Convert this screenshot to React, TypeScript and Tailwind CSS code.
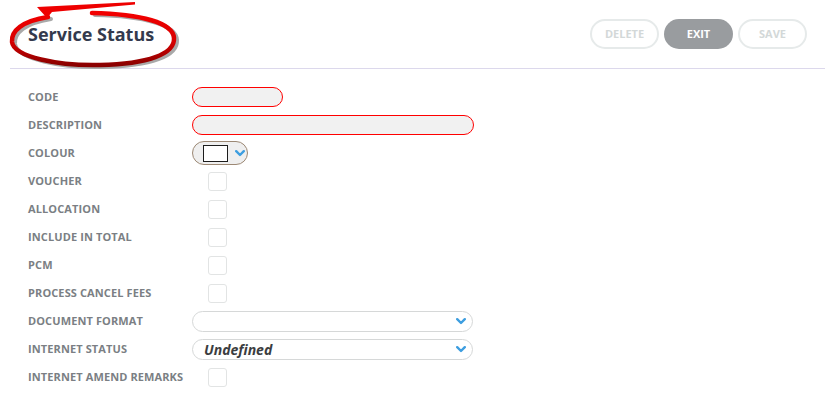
import type { ReactNode } from "react";

const labelClass =
  "w-[164px] shrink-0 text-[11px] font-bold uppercase tracking-[0.01em] text-[#7b7f84]";

function Chevron() {
  return (
    <svg width="10" height="7" viewBox="0 0 10 7" aria-hidden="true">
      <path
        d="M1.2 1.2 L5 5 L8.8 1.2"
        fill="none"
        stroke="#3d9ee0"
        strokeWidth="2.4"
        strokeLinecap="round"
        strokeLinejoin="round"
      />
    </svg>
  );
}

function Checkbox() {
  return (
    <div className="ml-4 h-[19px] w-[19px] rounded-[3px] border border-[#e2e4e4] bg-white" />
  );
}

function Row({ label, children }: { label: string; children: ReactNode }) {
  return (
    <div className="flex h-7 items-center">
      <span className={labelClass}>{label}</span>
      {children}
    </div>
  );
}

function Select({ value }: { value?: string }) {
  return (
    <div className="flex h-[21px] w-[281px] items-center justify-between rounded-full border border-[#d6d8d8] bg-white pl-[11px] pr-[6px]">
      <span className="text-[14px] font-bold italic text-[#3b3d40]">{value}</span>
      <Chevron />
    </div>
  );
}

const ringPath =
  "M48 17 C22 21 11 31 12 42 C14 57 58 66 100 65 C148 64 175 54 174 38 C173 23 142 14 92 13";

// hand-drawn red circle around the page title
function TitleMarker() {
  return (
    <svg
      className="pointer-events-none absolute -left-[10px] top-0"
      width="200"
      height="75"
      viewBox="0 0 200 75"
      aria-hidden="true"
    >
      <defs>
        <linearGradient id="ring" x1="0" y1="0" x2="0" y2="1">
          <stop offset="0" stopColor="#f20000" />
          <stop offset="0.55" stopColor="#d60000" />
          <stop offset="1" stopColor="#8a0000" />
        </linearGradient>
      </defs>
      <path
        d={ringPath}
        fill="none"
        stroke="#a9a9a9"
        strokeWidth="4"
        strokeLinecap="round"
        transform="translate(3 2)"
      />
      <path
        d={ringPath}
        fill="none"
        stroke="url(#ring)"
        strokeWidth="4.5"
        strokeLinecap="round"
      />
      <path d="M37 7 L135 2 L135 4.5 L52 12 L47 18 Z" fill="#ee0000" />
    </svg>
  );
}

export default function App() {
  return (
    <main className="min-h-[401px] bg-white font-['Open_Sans',sans-serif]">
      <header className="relative ml-[10px] flex h-[69px] items-center justify-between border-b border-[#dcd8ec] pl-[18px] pr-[18px]">
        <TitleMarker />
        <h1 className="relative text-[18px] font-bold text-[#333a4d]">
          Service Status
        </h1>
        <div className="flex gap-[5px]">
          <button className="h-[30px] w-[69px] rounded-full border-2 border-[#e6eaea] bg-white text-[11px] font-bold text-[#d3d8d8]">
            DELETE
          </button>
          <button className="h-[30px] w-[69px] rounded-full bg-[#999c9f] text-[11px] font-bold text-white">
            EXIT
          </button>
          <button className="h-[30px] w-[69px] rounded-full border-2 border-[#e6eaea] bg-white text-[11px] font-bold text-[#d3d8d8]">
            SAVE
          </button>
        </div>
      </header>

      <section className="pl-7 pt-[14px]">
        <Row label="Code">
          <div className="h-[20px] w-[91px] rounded-full border border-[#ff0000] bg-[#f1f1f1]" />
        </Row>
        <Row label="Description">
          <div className="h-[20px] w-[282px] rounded-full border border-[#ff0000] bg-[#f1f1f1]" />
        </Row>
        <Row label="Colour">
          <div className="flex h-[24px] w-[56px] items-center gap-[7px] rounded-full border border-[#9c8874] bg-[#efefef] pl-[10px]">
            <div className="h-[17px] w-[25px] border border-[#1c1c1c] bg-white" />
            <Chevron />
          </div>
        </Row>
        <Row label="Voucher">
          <Checkbox />
        </Row>
        <Row label="Allocation">
          <Checkbox />
        </Row>
        <Row label="Include in total">
          <Checkbox />
        </Row>
        <Row label="PCM">
          <Checkbox />
        </Row>
        <Row label="Process cancel fees">
          <Checkbox />
        </Row>
        <Row label="Document format">
          <Select />
        </Row>
        <Row label="Internet status">
          <Select value="Undefined" />
        </Row>
        <Row label="Internet amend remarks">
          <Checkbox />
        </Row>
      </section>
    </main>
  );
}
